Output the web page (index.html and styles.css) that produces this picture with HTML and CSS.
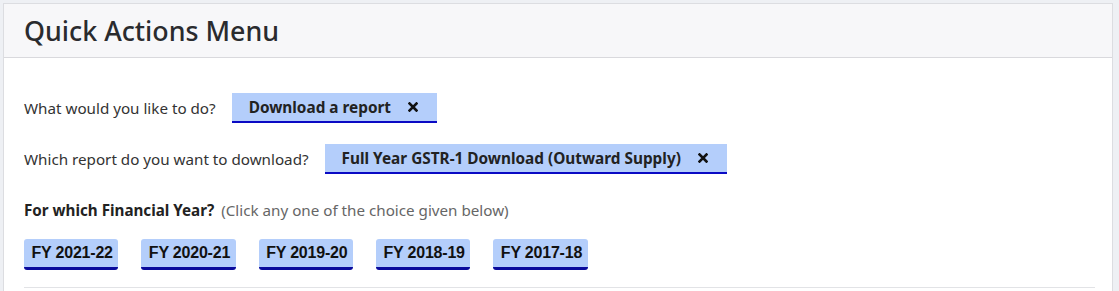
FILE: index.html
```html
<!DOCTYPE html>
<html>
<head>
<meta charset="utf-8">
<link rel="stylesheet" href="styles.css">
</head>
<body>
<div class="card">
  <div class="card-header">
    <h1 class="title">Quick Actions Menu</h1>
  </div>
  <div class="card-body">
    <div class="qrow">
      <span class="question">What would you like to do?</span>
      <span class="chip">Download a report <svg class="chip-x" viewBox="0 0 10 10" width="10" height="10"><path d="M1.5 1.5 L8.5 8.5 M8.5 1.5 L1.5 8.5" stroke="#111" stroke-width="2.6" stroke-linecap="square"/></svg></span>
    </div>
    <div class="qrow">
      <span class="question">Which report do you want to download?</span>
      <span class="chip">Full Year GSTR-1 Download (Outward Supply) <svg class="chip-x" viewBox="0 0 10 10" width="10" height="10"><path d="M1.5 1.5 L8.5 8.5 M8.5 1.5 L1.5 8.5" stroke="#111" stroke-width="2.6" stroke-linecap="square"/></svg></span>
    </div>
    <div class="qline">
      <span class="qbold">For which Financial Year?</span>
      <span class="hint">(Click any one of the choice given below)</span>
    </div>
    <div class="fy-list">
      <button class="fy">FY 2021-22</button>
      <button class="fy">FY 2020-21</button>
      <button class="fy">FY 2019-20</button>
      <button class="fy">FY 2018-19</button>
      <button class="fy">FY 2017-18</button>
    </div>
    <div class="divider"></div>
  </div>
</div>
</body>
</html>
```

FILE: styles.css
```css
html, body {
  margin: 0;
  padding: 0;
}
body {
  background: #eef0f4;
  font-family: "Noto Sans", "Open Sans", sans-serif;
  color: #212529;
  padding: 3px 6px 0 3px;
  height: 291px;
  box-sizing: border-box;
  overflow: hidden;
}
.card {
  background: #ffffff;
  border: 1px solid #dcdde1;
  border-bottom: none;
  height: 300px;
}
.card-header {
  background: #f7f7f9;
  border-bottom: 1px solid #d9d9dd;
  height: 53px;
  display: flex;
  align-items: center;
  padding-left: 20px;
}
.title {
  margin: 0;
  font-size: 26.8px;
  font-weight: 500;
  color: #2a2b2e;
  letter-spacing: 0;
}
.card-body {
  padding: 35px 16px 0 20px;
}
.qrow {
  display: flex;
  align-items: center;
  margin-bottom: 21px;
}
.question {
  font-size: 15.2px;
  color: #333;
}
.chip {
  margin-left: 16px;
  background: #b4cefb;
  border-bottom: 2px solid #0a0ac4;
  height: 28px;
  display: inline-flex;
  align-items: center;
  padding: 0 19px 0 17px;
  font-size: 15.35px;
  font-weight: 700;
  color: #222;
}
.chip-x {
  margin-left: 17px;
  display: block;
}
.qline {
  margin-top: 26px;
  font-size: 15.2px;
}
.qbold {
  font-weight: 700;
  color: #222;
}
.hint {
  color: #666;
  margin-left: 3px;
}
.fy-list {
  display: flex;
  gap: 23px;
  margin-top: 19px;
}
.fy {
  font-family: "Liberation Sans", Arial, sans-serif;
  font-weight: 700;
  font-size: 16px;
  letter-spacing: -0.2px;
  color: #111;
  background: #b4cefb;
  border: none;
  border-bottom: 3px solid #0a0a9c;
  border-radius: 3px;
  height: 31px;
  padding: 0 5.5px 0 7.5px;
}
.divider {
  margin-top: 17px;
  border-top: 1px solid #e2e3e6;
  width: 1071px;
}
```
